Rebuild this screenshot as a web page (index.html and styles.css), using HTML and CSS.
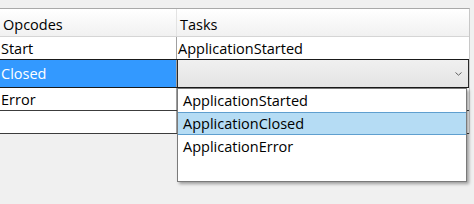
FILE: index.html
```html
<!DOCTYPE html>
<html>
<head>
<link rel="stylesheet" href="styles.css">
</head>
<body>

<div class="window">
  <div class="grid">
    <div class="grid-row header">
      <div class="cell col-op">Opcodes</div>
      <div class="cell col-task">Tasks</div>
    </div>
    <div class="grid-row above-selected">
      <div class="cell col-op">Start</div>
      <div class="cell col-task">ApplicationStarted</div>
    </div>
    <div class="grid-row selected">
      <div class="cell col-op">Closed</div>
      <div class="cell col-task">
        <div class="combo">
          <svg class="chevron" width="7" height="4" viewBox="0 0 7 4"><path d="M0.5 0.5 L3.5 3.2 L6.5 0.5" fill="none" stroke="#606060" stroke-width="1"/></svg>
        </div>
      </div>
    </div>
    <div class="grid-row lined">
      <div class="cell col-op">Error</div>
      <div class="cell col-task"></div>
    </div>
    <div class="grid-row lined">
      <div class="cell col-op"></div>
      <div class="cell col-task"></div>
    </div>

    <!-- list opened from the combo box -->
    <div class="dropdown">
      <div class="option">ApplicationStarted</div>
      <div class="option hover">ApplicationClosed</div>
      <div class="option">ApplicationError</div>
    </div>
  </div>
</div>

</body>
</html>
```

FILE: styles.css
```css
html, body {
  margin: 0;
  height: 100%;
}

body {
  background-color: #f0f0f0;
  font-family: "Open Sans", "Liberation Sans", sans-serif;
  font-size: 14.5px;
  color: #000;
}

.window {
  height: 204px;
  padding-top: 8px;
  box-sizing: border-box;
}

.grid {
  position: relative;
  width: 469px;
  border-top: 1px solid #a9a9a9;
  border-right: 1px solid #c8c8c8;
  background-color: #fff;
}

.grid-row {
  display: flex;
  height: 22px;
  border-bottom: 1px solid #fff;
}

.cell {
  display: flex;
  align-items: center;
  padding-left: 1px;
  white-space: nowrap;
}

.col-op {
  width: 175px;
  border-right: 1px solid #a0a0a0;
}

.col-task {
  flex-grow: 1;
}

.header {
  height: 27px;
  background: linear-gradient(#ffffff, #f1f1f1);
  border-bottom: 1px solid #d5d5d5;
}

.header .cell {
  padding-left: 3px;
  padding-top: 4px;
}

.header .col-op {
  width: 173px;
  border-right: 1px solid #e3e3e3;
}

.above-selected {
  border-bottom: 1px solid #1a1a1a;
}

.selected {
  height: 27px;
  border-bottom: 1px solid #1a1a1a;
}

.selected .col-op {
  background-color: #3399ff;
  color: #fff;
}

.selected .col-task {
  padding-left: 0;
}

.combo {
  width: 100%;
  height: 100%;
  box-sizing: border-box;
  border-left: 1px solid #2b2b2b;
  border-right: 1px solid #2b2b2b;
  background: linear-gradient(#f0f0f0, #e4e4e4);
  display: flex;
  align-items: center;
  justify-content: flex-end;
  padding-right: 6px;
}

.lined {
  border-bottom: 1px solid #3c3c3c;
}

.dropdown {
  position: absolute;
  left: 177px;
  top: 79px;
  width: 288px;
  height: 92px;
  background-color: #fff;
  border: 1px solid #7a7a7a;
  box-shadow: 2px 2px 3px rgba(0, 0, 0, 0.35);
}

.option {
  height: 23px;
  line-height: 23px;
  padding-left: 5px;
  box-sizing: border-box;
}

.option.hover {
  background-color: #b5dcf4;
  border-top: 1px solid #5f9fcf;
  border-bottom: 1px solid #5f9fcf;
  line-height: 21px;
}
```
